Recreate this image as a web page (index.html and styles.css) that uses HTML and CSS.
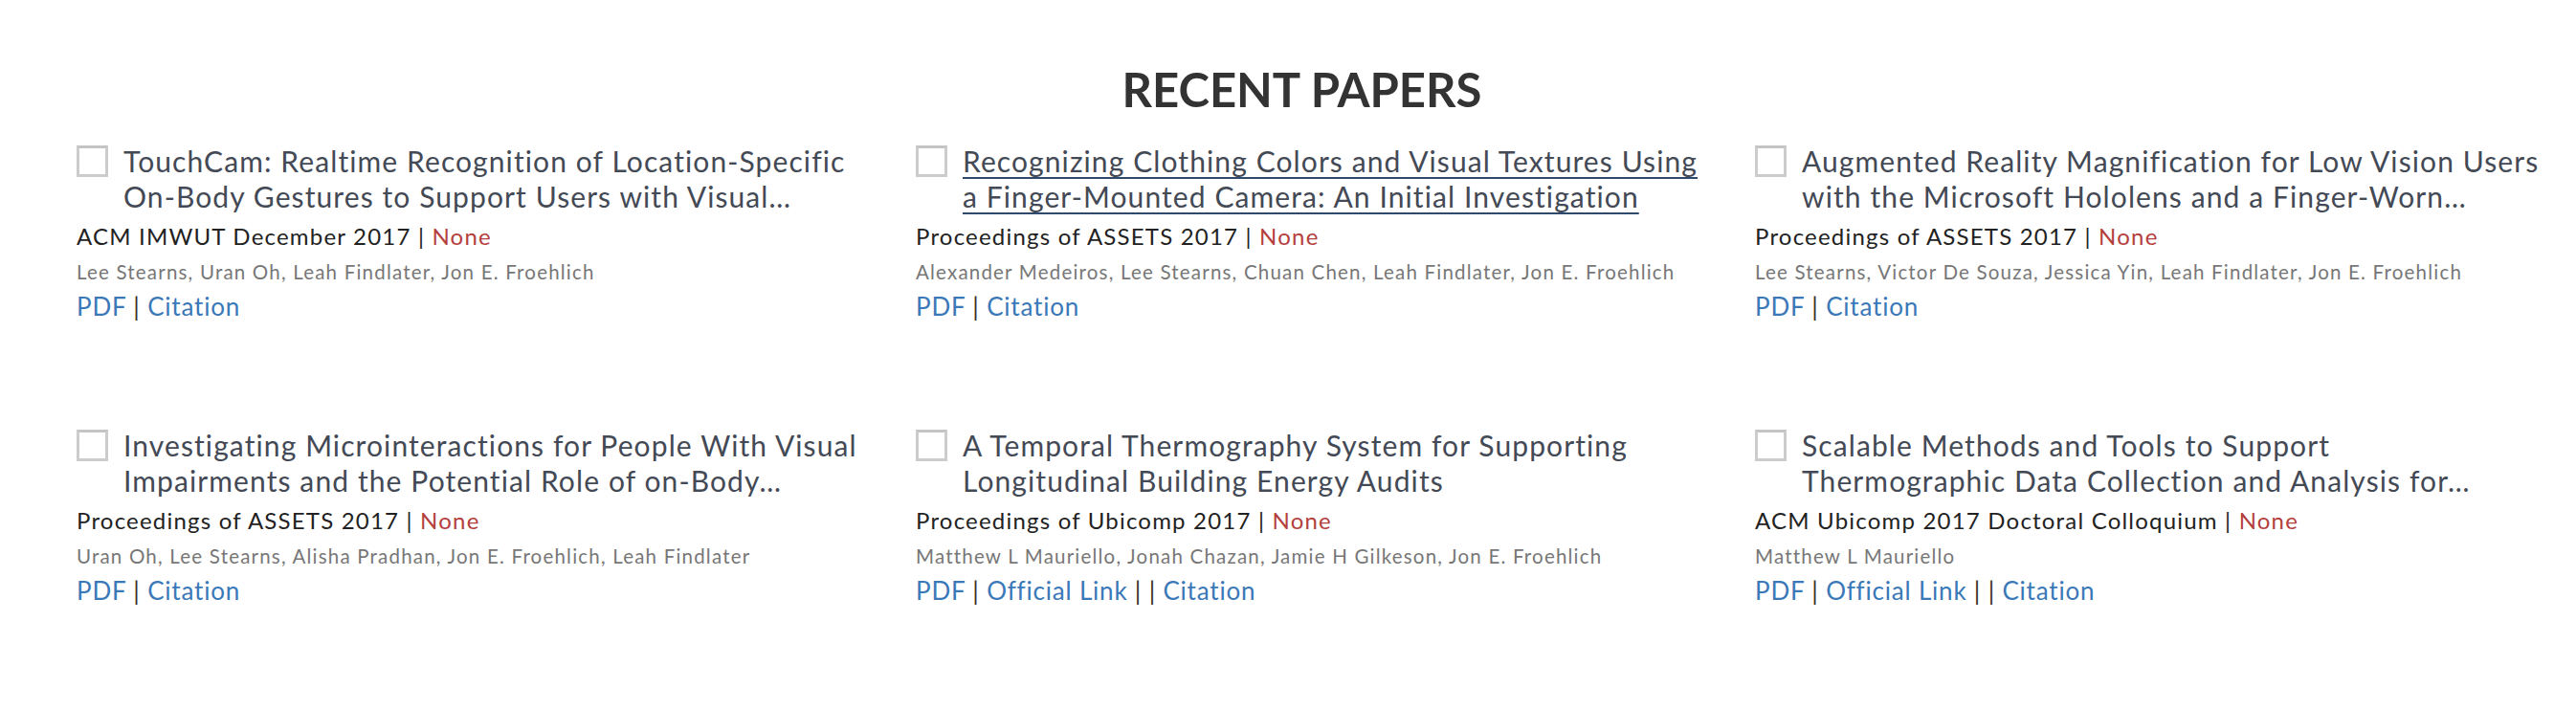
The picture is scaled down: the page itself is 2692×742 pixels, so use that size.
FILE: index.html
```html
<!DOCTYPE html>
<html lang="en">
<head>
<meta charset="utf-8">
<title>Recent Papers</title>
<link rel="stylesheet" href="styles.css">
</head>
<body>
<section class="papers">
  <h2 class="papers-title">RECENT PAPERS</h2>
  <div class="papers-grid">
    <article class="paper">
      <div class="paper-head">
        <span class="paper-check"></span>
        <a class="paper-name" href="#" title="TouchCam: Realtime Recognition of Location-Specific On-Body Gestures to Support Users with Visual Impairments">TouchCam: Realtime Recognition of Location-Specific On-Body Gestures to Support Users with Visual…</a>
      </div>
      <div class="paper-venue">ACM IMWUT December 2017 | <span class="paper-award">None</span></div>
      <div class="paper-authors">Lee Stearns, Uran Oh, Leah Findlater, Jon E. Froehlich</div>
      <div class="paper-links"><a href="#">PDF</a> | <a href="#">Citation</a></div>
    </article>
    <article class="paper">
      <div class="paper-head">
        <span class="paper-check"></span>
        <a class="paper-name is-hover" href="#">Recognizing Clothing Colors and Visual Textures Using a Finger-Mounted Camera: An Initial Investigation</a>
      </div>
      <div class="paper-venue">Proceedings of ASSETS 2017 | <span class="paper-award">None</span></div>
      <div class="paper-authors">Alexander Medeiros, Lee Stearns, Chuan Chen, Leah Findlater, Jon E. Froehlich</div>
      <div class="paper-links"><a href="#">PDF</a> | <a href="#">Citation</a></div>
    </article>
    <article class="paper">
      <div class="paper-head">
        <span class="paper-check"></span>
        <a class="paper-name" href="#" title="Augmented Reality Magnification for Low Vision Users with the Microsoft Hololens and a Finger-Worn Camera">Augmented Reality Magnification for Low Vision Users with the Microsoft Hololens and a Finger-Worn…</a>
      </div>
      <div class="paper-venue">Proceedings of ASSETS 2017 | <span class="paper-award">None</span></div>
      <div class="paper-authors">Lee Stearns, Victor De Souza, Jessica Yin, Leah Findlater, Jon E. Froehlich</div>
      <div class="paper-links"><a href="#">PDF</a> | <a href="#">Citation</a></div>
    </article>
    <article class="paper">
      <div class="paper-head">
        <span class="paper-check"></span>
        <a class="paper-name" href="#" title="Investigating Microinteractions for People With Visual Impairments and the Potential Role of on-Body Interaction">Investigating Microinteractions for People With Visual Impairments and the Potential Role of on-Body…</a>
      </div>
      <div class="paper-venue">Proceedings of ASSETS 2017 | <span class="paper-award">None</span></div>
      <div class="paper-authors">Uran Oh, Lee Stearns, Alisha Pradhan, Jon E. Froehlich, Leah Findlater</div>
      <div class="paper-links"><a href="#">PDF</a> | <a href="#">Citation</a></div>
    </article>
    <article class="paper">
      <div class="paper-head">
        <span class="paper-check"></span>
        <a class="paper-name" href="#">A Temporal Thermography System for Supporting Longitudinal Building Energy Audits</a>
      </div>
      <div class="paper-venue">Proceedings of Ubicomp 2017 | <span class="paper-award">None</span></div>
      <div class="paper-authors">Matthew L Mauriello, Jonah Chazan, Jamie H Gilkeson, Jon E. Froehlich</div>
      <div class="paper-links"><a href="#">PDF</a> | <a href="#">Official Link</a> | | <a href="#">Citation</a></div>
    </article>
    <article class="paper">
      <div class="paper-head">
        <span class="paper-check"></span>
        <a class="paper-name" href="#" title="Scalable Methods and Tools to Support Thermographic Data Collection and Analysis for Commercial Buildings">Scalable Methods and Tools to Support Thermographic Data Collection and Analysis for…</a>
      </div>
      <div class="paper-venue">ACM Ubicomp 2017 Doctoral Colloquium | <span class="paper-award">None</span></div>
      <div class="paper-authors">Matthew L Mauriello</div>
      <div class="paper-links"><a href="#">PDF</a> | <a href="#">Official Link</a> | | <a href="#">Citation</a></div>
    </article>
  </div>
</section>
</body>
</html>
```

FILE: styles.css
```css
html, body {
  margin: 0;
  padding: 0;
  background: #ffffff;
}

body {
  font-family: "Lato", "Liberation Sans", sans-serif;
  color: #222222;
}

.papers {
  padding: 66px 16px 0 45px;
}

.papers-title {
  margin: 0;
  font-family: "Lato", "Liberation Sans", sans-serif;
  font-weight: 700;
  font-size: 49px;
  line-height: 54px;
  letter-spacing: 0;
  color: #333333;
  text-align: center;
}

.papers-grid {
  margin-top: 30px;
  display: grid;
  grid-template-columns: repeat(3, 1fr);
  row-gap: 111px;
}

.paper {
  padding-left: 35px;
  height: 186px;
}

.paper-head {
  display: flex;
  align-items: flex-start;
  gap: 16px;
}

.paper-check {
  flex: 0 0 auto;
  width: 27px;
  height: 27px;
  margin-top: 2px;
  border: 3px solid #cccccc;
  border-top-color: #c4c4c4;
  background: #ffffff;
}

.paper-name {
  display: block;
  width: 772px;
  font-size: 30px;
  line-height: 37px;
  letter-spacing: 1.1px;
  color: #434955;
  text-decoration: none;
}

.paper-name.is-hover {
  text-decoration: underline;
  text-decoration-color: #2f4a6c;
  text-decoration-thickness: 2px;
  text-underline-offset: 5px;
}

.paper-venue {
  margin-top: 8px;
  font-size: 24px;
  line-height: 30px;
  letter-spacing: 1.2px;
  color: #222222;
}

.paper-award {
  color: #b4403d;
}

.paper-authors {
  margin-top: 9px;
  font-size: 20.5px;
  line-height: 26px;
  letter-spacing: 1.2px;
  color: #777777;
  white-space: nowrap;
}

.paper-links {
  margin-top: 7px;
  font-size: 26px;
  line-height: 32px;
  letter-spacing: 0.8px;
  color: #3a2f28;
}

.paper-links a {
  color: #3a78b8;
  text-decoration: none;
}
```
